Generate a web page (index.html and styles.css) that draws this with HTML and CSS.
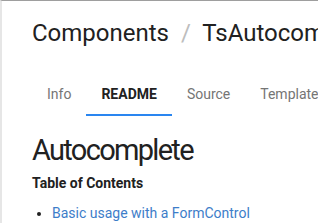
FILE: index.html
```html
<!DOCTYPE html>
<html lang="en">
<head>
    <meta charset="UTF-8">
    <title>TsAutocomplete</title>
    <link rel="stylesheet" href="styles.css">
</head>
<body>
<div class="page">
    <h1 class="crumbs">Components <span class="sep">/</span> TsAutocompleteComponent</h1>

    <!-- tabs -->
    <nav class="tabs">
        <a class="tab">Info</a>
        <a class="tab active">README</a>
        <a class="tab">Source</a>
        <a class="tab">Template</a>
        <a class="tab">Styles</a>
    </nav>

    <div class="readme">
        <h2>Autocomplete</h2>
        <h4>Table of Contents</h4>
        <ul>
            <li><a href="#">Basic usage with a FormControl</a></li>
            <li><a href="#">Basic usage with ngModel</a></li>
        </ul>
    </div>
</div>
</body>
</html>
```

FILE: styles.css
```css
body {
    margin: 0;
    font-family: Roboto, "Liberation Sans", sans-serif;
    color: #212121;
    background: #fff;
    overflow: hidden;
}
.page {
    border-top: 1px solid #9e9e9e;
    border-left: 2px solid #e6e6e6;
    height: 100vh;
    padding-left: 30px;
    white-space: nowrap;
}
.crumbs {
    margin: 0;
    padding-top: 17px;
    font-size: 24px;
    font-weight: 400;
    line-height: 30px;
    color: #212121;
}
.sep {
    color: #bdbdbd;
    margin: 0 6px;
}
.tabs {
    display: flex;
    margin-top: 38px;
}
.tab {
    font-size: 14px;
    color: #757575;
    padding: 0 15px;
    line-height: 16px;
    padding-bottom: 12px;
    border-bottom: 2px solid transparent;
}
.tab.active {
    font-weight: 700;
    color: #212121;
    border-bottom-color: #2a86f0;
}
.readme h2 {
    margin: 16px 0 0;
    font-size: 29px;
    font-weight: 400;
    letter-spacing: -1.7px;
    line-height: 36px;
}
.readme h4 {
    margin: 6px 0 0;
    font-size: 14px;
    font-weight: 700;
    line-height: 18px;
}
.readme ul {
    margin: 11px 0 0;
    padding-left: 20px;
    font-size: 14px;
    line-height: 20px;
}
.readme a {
    color: #3d7dc9;
    text-decoration: none;
}
```
